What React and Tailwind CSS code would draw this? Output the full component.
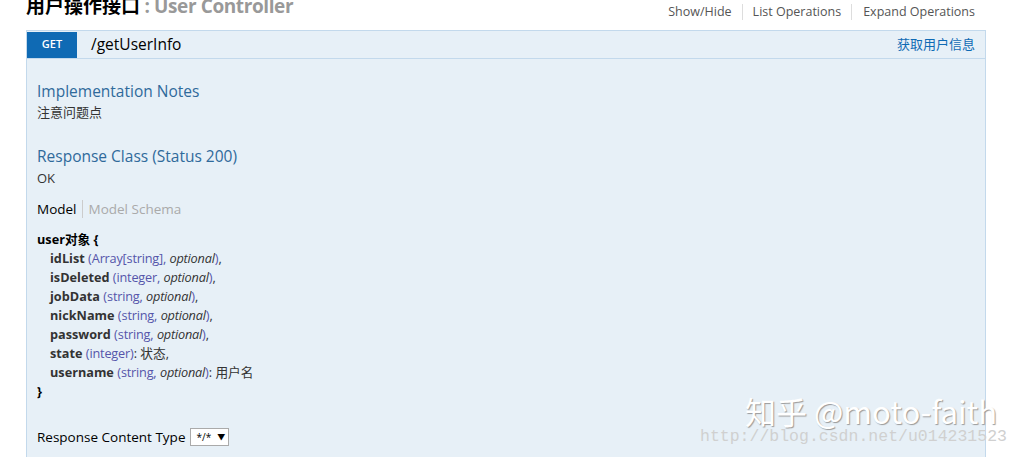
import React from "react";

const font = { fontFamily: '"Open Sans", "Noto Sans CJK SC", sans-serif' };

const fields = [
  { name: "idList", type: "Array[string]", optional: true },
  { name: "isDeleted", type: "integer", optional: true },
  { name: "jobData", type: "string", optional: true },
  { name: "nickName", type: "string", optional: true },
  { name: "password", type: "string", optional: true },
  { name: "state", type: "integer", desc: "状态" },
  { name: "username", type: "string", optional: true, desc: "用户名", last: true },
];

function Field({ f }) {
  return (
    <div className="pl-[13px] h-[19px] leading-[19px]">
      <span className="font-bold text-[#333]">{f.name}</span>{" "}
      <span className="text-[#55a]">(</span>
      <span className="text-[#55a] tracking-[-0.2px]">{f.type}</span>
      {f.optional ? (
        <>
          <span className="text-[#55a]">, </span>
          <span className="italic text-[#333] tracking-[-0.2px]">optional</span>
        </>
      ) : null}
      <span className="text-[#55a]">)</span>
      {f.desc ? <span className="text-[#333]">: {f.desc}</span> : null}
      {f.last ? null : <span className="text-[#333]">,</span>}
    </div>
  );
}

export default function App() {
  return (
    <div className="relative w-[1022px] h-[457px] overflow-hidden bg-white" style={font}>
      <div className="pl-[26px] pr-[36px]">
        {/* resource heading */}
        <div className="flex items-start justify-between h-[30px]">
          <h2 className="-mt-[8px] text-[19px] font-bold leading-[28px] text-[#000]">
            用户操作接口
            <span className="text-[#999] font-bold tracking-[-0.4px]"> : User Controller</span>
          </h2>
          <ul className="flex items-center text-[12.5px] text-[#555] mt-[4px] pr-[11px]">
            <li className="pr-[10px] border-r border-[#ddd] leading-[16px]">Show/Hide</li>
            <li className="px-[10px] border-r border-[#ddd] leading-[16px]">List Operations</li>
            <li className="pl-[11px] leading-[16px]">Expand Operations</li>
          </ul>
        </div>

        {/* operation block */}
        <div className="w-[960px] border border-[#c3d9ec] bg-[#e7f0f7]">
          <div className="flex items-center h-[28px] border-b border-[#c3d9ec]">
            <span className="flex items-center justify-center w-[50px] h-[26px] bg-[#0f6ab4] text-white text-[11px] font-semibold">
              GET
            </span>
            <span className="ml-[14px] text-[15.5px] text-[#000]">/getUserInfo</span>
            <span className="ml-auto mr-[10px] text-[13px] text-[#0f6ab4]">获取用户信息</span>
          </div>

          <div className="pl-[10px] pt-[20px] pb-[20px]">
            <h4 className="text-[15.5px] leading-[24px] text-[#2f6a9b]">Implementation Notes</h4>
            <p className="text-[13px] leading-[18px] text-[#333]">注意问题点</p>

            <h4 className="mt-[23px] text-[15.5px] leading-[24px] text-[#2f6a9b]">
              Response Class (Status 200)
            </h4>
            <p className="text-[13px] leading-[20px] text-[#333]">OK</p>

            <div className="mt-[12px] flex items-center text-[13.5px] leading-[18px]">
              <span className="text-[#000] pr-[5px] border-r border-[#ccc]">Model</span>
              <span className="pl-[6px] text-[#aaa]">Model Schema</span>
            </div>

            <div className="mt-[12px] text-[12.7px]">
              <div className="h-[19px] leading-[19px] font-bold text-[#000]">user对象 {"{"}</div>
              {fields.map((f) => (
                <Field key={f.name} f={f} />
              ))}
              <div className="h-[19px] leading-[19px] font-bold text-[#000]">{"}"}</div>
            </div>

            <div className="mt-[26px] flex items-center text-[13.5px] text-[#000]">
              <span>Response Content Type</span>
              <span className="ml-[5px] flex items-center gap-[6px] h-[18px] w-[39px] px-[5px] bg-white border border-[#aaa] text-[10px]">
                <span>*/*</span>
                <span className="text-[8px]">▼</span>
              </span>
            </div>
          </div>
        </div>
      </div>

      {/* watermark */}
      <div className="absolute left-[745px] top-[393px] text-[31px] leading-[36px] text-white"
        style={{ fontFamily: '"Noto Sans CJK SC", "DejaVu Sans", sans-serif', textShadow: "1px 1px 1px #9a9a9a" }}>
        知乎 @moto-faith
      </div>
      <div className="absolute left-[700px] top-[427px] text-[16.5px] leading-[20px] text-[#d0d0d0]"
        style={{ fontFamily: '"Liberation Mono", monospace' }}>
        http://blog.csdn.net/u014231523
      </div>
    </div>
  );
}
